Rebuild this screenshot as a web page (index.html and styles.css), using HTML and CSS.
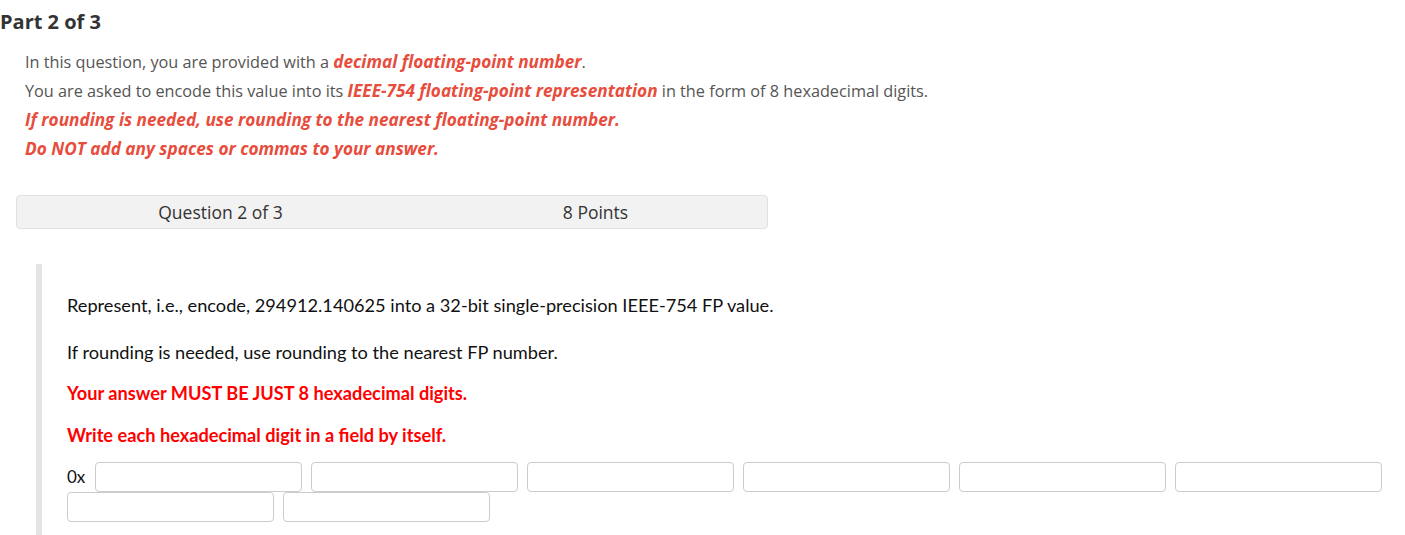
FILE: index.html
```html
<!DOCTYPE html>
<html>
<head>
<meta charset="utf-8">
<link rel="stylesheet" href="styles.css">
</head>
<body>
<h2 class="part-title">Part 2 of 3</h2>
<div class="intro">
  <p>In this question, you are provided with a <em class="hl">decimal floating-point number</em>.</p>
  <p>You are asked to encode this value into its <em class="hl">IEEE-754 floating-point representation</em> in the form of 8 hexadecimal digits.</p>
  <p><em class="hl">If rounding is needed, use rounding to the nearest floating-point number.</em></p>
  <p><em class="hl">Do NOT add any spaces or commas to your answer.</em></p>
</div>
<div class="qbar">
  <div class="qbar-cell">Question 2 of 3</div>
  <div class="qbar-cell">8 Points</div>
</div>
<div class="qbody">
  <p class="qline">Represent, i.e., encode, 294912.140625 into a 32-bit single-precision IEEE-754 FP value.</p>
  <p class="qline">If rounding is needed, use rounding to the nearest FP number.</p>
  <p class="qline warn">Your answer MUST BE JUST 8 hexadecimal digits.</p>
  <p class="qline warn">Write each hexadecimal digit in a field by itself.</p>
  <div class="answer">
    <span class="prefix">0x</span>
    <input class="digit" type="text">
    <input class="digit" type="text">
    <input class="digit" type="text">
    <input class="digit" type="text">
    <input class="digit" type="text">
    <input class="digit" type="text">
    <input class="digit" type="text">
    <input class="digit" type="text">
  </div>
</div>
</body>
</html>
```

FILE: styles.css
```css
html, body {
  margin: 0;
  padding: 0;
  background: #fff;
}
body {
  font-family: "Open Sans", "Noto Sans", sans-serif;
  color: #555;
  overflow: hidden;
}
.part-title {
  margin: 0;
  padding-top: 8px;
  font-size: 20px;
  line-height: 27px;
  font-weight: 700;
  color: #333;
}
.intro {
  padding: 13px 0 0 25px;
  font-size: 16.25px;
}
.intro p {
  margin: 0;
  height: 29px;
  line-height: 29px;
}
.hl {
  color: #e74c3c;
  font-weight: 700;
  font-style: italic;
  font-size: 17.2px;
  line-height: 1;
}
.qbar {
  margin: 31px 0 0 16px;
  height: 32px;
  background: #f2f2f2;
  border: 1px solid #e0e0e0;
  border-radius: 4px;
  display: grid;
  grid-template-columns: 375px 375px;
  padding-left: 16px;
  box-sizing: content-box;
  width: 734px;
  color: #333;
  font-size: 17.5px;
}
.qbar-cell {
  text-align: center;
  line-height: 32px;
  white-space: nowrap;
}
.qbody {
  margin: 35px 0 0 36px;
  border-left: 6px solid #e4e4e4;
  padding: 29px 0 14px 25px;
  font-family: "Lato", "Liberation Sans", sans-serif;
  color: #111;
  font-size: 18.2px;
  width: 1327px;
}
.qline {
  margin: 0;
  line-height: 24px;
}
.qline:nth-child(1) { margin-bottom: 23px; }
.qline:nth-child(2) { margin-bottom: 17px; }
.qline:nth-child(3) { margin-bottom: 18px; }
.qline:nth-child(4) { margin-bottom: 15px; }
.warn {
  color: #f00;
  font-weight: 700;
}
.answer {
  display: flex;
  flex-wrap: wrap;
  column-gap: 9px;
  row-gap: 0;
  align-items: center;
}
.prefix {
  width: 20px;
  margin-right: -1px;
  line-height: 30px;
  font-size: 17px;
}
.digit {
  width: 207px;
  height: 30px;
  box-sizing: border-box;
  border: 1px solid #ccc;
  border-radius: 4px;
  background: #fff;
  margin: 0;
  padding: 0 6px;
}
```
